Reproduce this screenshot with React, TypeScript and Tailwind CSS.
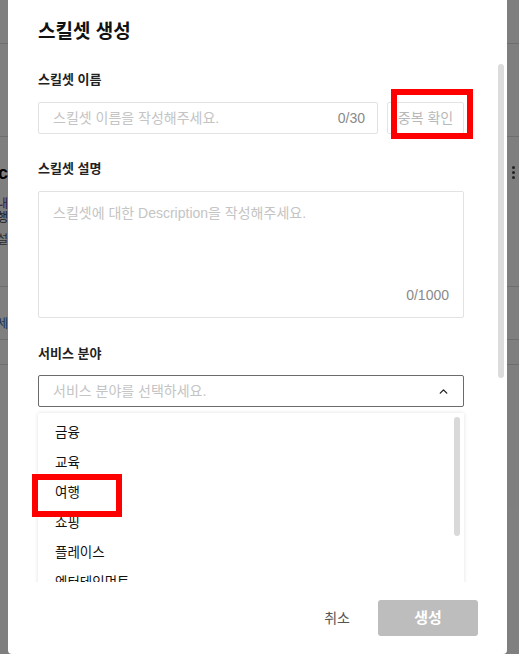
import { ChevronUp } from 'lucide-react'

const categories = ['금융', '교육', '여행', '쇼핑', '플레이스', '엔터테인먼트', '생활']

function BackgroundPage() {
  // page behind the dimmed overlay, only its edges peek out
  return (
    <div className="absolute inset-0 bg-white">
      <div className="h-[44px] border-b border-[#dddddd]" />
      <div className="h-[93px] border-b border-[#dddddd]" />
      <div className="h-[150px] border-b border-[#dddddd] pt-[24px]">
        <div className="flex w-[8px] flex-col items-end overflow-hidden">
          <span className="h-[24px] whitespace-nowrap text-[18px] font-bold leading-[24px] text-black">abc</span>
          <span className="mt-[12px] h-[14px] whitespace-nowrap text-[12px] leading-[14px] text-[#6b2d6b]">안내</span>
          <span className="h-[14px] whitespace-nowrap text-[12px] leading-[14px] text-[#333]">진행</span>
          <span className="mt-[8px] h-[14px] whitespace-nowrap text-[12px] leading-[14px] text-[#555]">설</span>
        </div>
      </div>
      <div className="h-[53px] border-b border-[#dddddd] pt-[30px]">
        <div className="flex w-[8px] flex-col items-end overflow-hidden">
          <span className="whitespace-nowrap text-[12px] leading-[14px] text-[#3563a8]">상세</span>
        </div>
      </div>
      <div className="h-[25px] border-b border-[#dddddd]" />
      <div className="absolute right-[4px] top-[166px] flex flex-col gap-[2px]">
        <span className="h-[3px] w-[3px] rounded-full bg-[#444]" />
        <span className="h-[3px] w-[3px] rounded-full bg-[#444]" />
        <span className="h-[3px] w-[3px] rounded-full bg-[#444]" />
      </div>
    </div>
  )
}

export default function App() {
  return (
    <div className="relative h-[654px] w-full overflow-hidden font-['Liberation_Sans','Noto_Sans_CJK_KR',sans-serif]">
      <BackgroundPage />
      <div className="absolute inset-0 bg-black/50" />

      {/* Create skillset modal */}
      <div className="absolute inset-0 pl-[8px]">
        <div className="relative flex h-full w-[499px] flex-col rounded-b-[4px] bg-white">
          <h2 className="px-[30px] pt-[19px] text-[19px] font-bold leading-[26px] text-[#111]">
            스킬셋 생성
          </h2>

          <div className="relative flex-1 overflow-hidden pl-[30px] pr-[43px] pt-[25px]">
            <label className="block text-[13px] font-bold leading-[20px] text-[#222]">스킬셋 이름</label>
            <div className="mt-[12px] flex gap-[9px]">
              <div className="flex h-[32px] w-[340px] items-center justify-between rounded-[2px] border border-[#e2e2e2] pl-[14px] pr-[12px]">
                <span className="text-[14px] text-[#c4c4c4]">스킬셋 이름을 작성해주세요.</span>
                <span className="text-[14px] text-[#8a8a8a]">0/30</span>
              </div>
              <button className="h-[32px] flex-1 rounded-[2px] border border-[#e4e4e4] text-[14px] text-[#b8b8b8]">
                중복 확인
              </button>
            </div>

            <label className="mt-[25px] block text-[13px] font-bold leading-[20px] text-[#222]">스킬셋 설명</label>
            <div className="mt-[12px] flex h-[127px] flex-col justify-between rounded-[2px] border border-[#e2e2e2] px-[14px] pb-[11px] pt-[11px]">
              <span className="text-[14px] text-[#c4c4c4]">스킬셋에 대한 Description을 작성해주세요.</span>
              <span className="self-end text-[14px] text-[#8a8a8a]">0/1000</span>
            </div>

            <label className="mt-[26px] block text-[13px] font-bold leading-[20px] text-[#222]">서비스 분야</label>
            <div className="relative mt-[11px]">
              <div className="flex h-[32px] items-center justify-between rounded-[2px] border border-[#6b6b6b] pl-[14px] pr-[13px]">
                <span className="text-[14px] text-[#c4c4c4]">서비스 분야를 선택하세요.</span>
                <ChevronUp className="h-[13px] w-[13px] text-[#222]" strokeWidth={2.5} />
              </div>

              {/* dropdown menu */}
              <div className="absolute left-0 right-0 top-[38px] rounded-[2px] bg-white pt-[5px] shadow-[0_0_4px_rgba(0,0,0,0.12)]">
                {categories.map((c) => (
                  <div key={c} className="flex h-[30px] items-center px-[17px] text-[13.5px] text-[#111]">
                    {c}
                  </div>
                ))}
                <div className="absolute right-[4px] top-[4px] h-[119px] w-[6px] rounded-full bg-[#d9d9d9]" />
              </div>
            </div>
          </div>

          <div className="flex h-[72px] items-center justify-end gap-[28px] pr-[29px]">
            <button className="text-[14px] text-[#555]">취소</button>
            <button className="h-[36px] w-[100px] rounded-[3px] bg-[#bdbdbd] text-[15px] font-bold text-white">생성</button>
          </div>

          {/* modal scrollbar thumb */}
          <div className="absolute right-[3px] top-[64px] h-[314px] w-[6px] rounded-full bg-[#dcdcdc]" />

          {/* red annotation boxes */}
          <div className="absolute left-[383px] top-[89px] h-[50px] w-[82px] border-[6px] border-[#ff0000]" />
          <div className="absolute left-[24px] top-[474px] h-[43px] w-[90px] border-[6px] border-[#ff0000]" />
        </div>
      </div>
    </div>
  )
}
